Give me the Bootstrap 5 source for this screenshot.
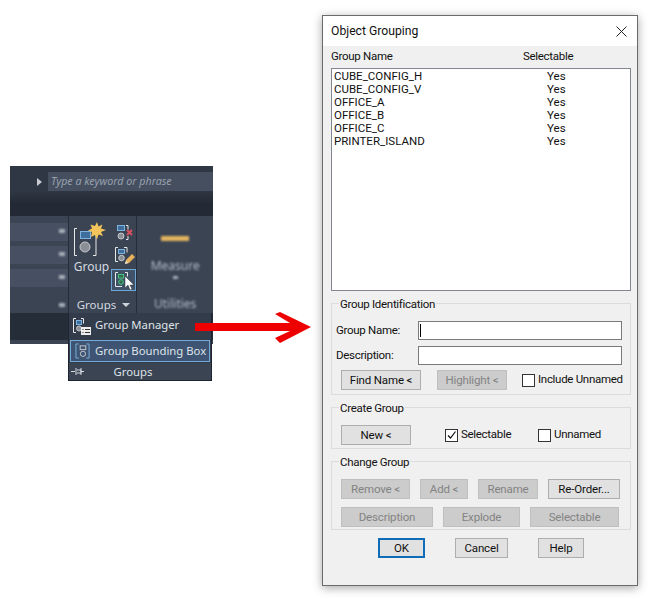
<!DOCTYPE html>
<html lang="en">
<head>
  <meta charset="UTF-8" />
  <title>Object Grouping</title>
  <link href="https://cdn.jsdelivr.net/npm/bootstrap@5.3.2/dist/css/bootstrap.min.css" rel="stylesheet">
  <style>
    body { background: #fff; margin: 0; width: 654px; height: 599px; overflow: hidden; position: relative; }
    /* left picture: ribbon */
    .ribbon-shot { position: absolute; left: 10px; top: 166px; width: 203px; height: 178px; background: #252d39; font-family: "Noto Sans", sans-serif; color: #d5dae0; font-size: 12px; }
    .search-row { height: 50px; padding: 6px 0 0 27px; background: linear-gradient(#2f3744 50%, #232a35 75%); }
    .search-tri { width: 0; height: 0; border-left: 5px solid #c8ccd2; border-top: 4px solid transparent; border-bottom: 4px solid transparent; margin-top: 6px; margin-right: 6px; }
    .search-box { width: 165px; height: 19px; background: #454f60; color: #98a1ae; font-style: italic; font-size: 10.7px; line-height: 19px; padding-left: 3px; white-space: nowrap; }
    .panels { height: 97px; gap: 1px; }
    .panel-a { width: 58px; background: #3a4453; padding-top: 7px; }
    .blur-row { height: 18px; margin-bottom: 5px; background: #465062; filter: blur(.6px); padding: 6px 0 0 49px; }
    .blur-row.plain { background: none; padding-top: 11px; }
    .blur-row i { display: block; width: 6px; height: 4px; background: #a8afba; filter: blur(1px); }
    .panel-b { width: 68px; background: #3a4453; position: relative; }
    .panel-c { width: 76px; background: #3a4453; text-align: center; color: #b5bcc6; }
    .tool-big { position: absolute; left: 3px; top: 6px; }
    .tool-label { position: absolute; left: 5px; top: 42px; font-size: 12px; }
    .tool-small { position: absolute; }
    .tool-on { left: 42px; top: 53px; width: 25px; height: 22px; border: 1px solid #6fa8d6; background: #3f5268; }
    .panel-foot { position: absolute; left: 8px; top: 80px; font-size: 11.5px; white-space: nowrap; }
    .foot-tri { display: inline-block; width: 0; height: 0; border-top: 4px solid #cfd4da; border-left: 4px solid transparent; border-right: 4px solid transparent; margin: 0 0 2px 3px; }
    .line-bar { width: 28px; height: 5px; background: #e3b45f; margin: 20px auto 17px; filter: blur(1px); }
    .blur-text { filter: blur(1.3px); font-size: 12px; line-height: 16px; }
    .blur-dot { filter: blur(1px); width: 5px; height: 3px; background: #a8afba; margin: 2px auto 17px; }
    .strip { height: 27px; }
    .strip-low { height: 4px; background: #3a4453; }
    .drop-menu { position: absolute; left: 68px; top: 313px; width: 144px; height: 68px; background: #333c4a; border: 1px solid #1f2631; border-top: 0; font-family: "Noto Sans", sans-serif; color: #dfe3e8; font-size: 11.3px; }
    .drop-item { height: 25px; padding-left: 4px; gap: 4px; white-space: nowrap; }
    .drop-sel { height: 22px; margin: 2px 1px 0 1px; padding-left: 4px; gap: 5px; background: #3e5472; border: 1px solid #71a9d8; white-space: nowrap; }
    .drop-item svg, .drop-sel svg { flex: none; }
    .drop-foot { height: 17px; background: #3a4453; position: relative; text-align: center; line-height: 17px; margin-top: 1px; padding-right: 14px; }
    .pin { position: absolute; left: 2px; top: 4px; }
    .red-arrow { position: absolute; left: 190px; top: 305px; }
    /* right picture: dialog */
    .dlg { position: absolute; left: 322px; top: 15px; width: 316px; height: 571px; background: #f0f0f0; border: 1px solid #6a6a6a; box-shadow: 0 2px 9px rgba(0,0,0,.35); font-family: Roboto, "Liberation Sans", sans-serif; font-size: 11.5px; letter-spacing: -.3px; color: #111; }
    .dlg-title { height: 30px; background: #fff; padding: 0 10px 0 8px; font-size: 12.2px; letter-spacing: 0; }
    .dlg-body { padding: 0 6px 0 8px; }
    .list-head { height: 21px; padding-top: 1px; }
    .col-name { width: 192px; }
    .name-list { height: 223px; background: #fff; border: 1px solid #828790; padding: 1px 2px; margin-top: 1px; letter-spacing: 0; }
    .name-row { height: 13px; line-height: 13px; }
    .col-val { width: 213px; }
    .grp { position: relative; border: 1px solid #dcdcdc; margin-top: 12px; padding: 0 9px; }
    .grp-1 { height: 92px; }
    .grp-2 { height: 42px; }
    .grp-3 { height: 69px; }
    .grp-title { position: absolute; left: 7px; top: -7px; background: #f0f0f0; padding: 0 1px; line-height: 14px; }
    .w-btn { flex: none; height: 20px; padding: 0; background: #e1e1e1; border: 1px solid #adadad; border-radius: 0; font-size: 11.5px; letter-spacing: -.15px; color: #111; line-height: 17px; font-family: inherit; }
    .w-btn:disabled { background: #cccccc; border-color: #bfbfbf; color: #838383; opacity: 1; }
    .w-btn.dflt { border: 2px solid #0f6cb8; }
    .w-field { flex: none; height: 19px; background: #fff; border: 1px solid #7a7a7a; width: 204px; position: relative; }
    .caret-bar { position: absolute; left: 1px; top: 2px; width: 1px; height: 13px; background: #000; }
    .field-label { width: 82px; margin-left: -5px; flex: none; }
    .field-next { margin-top: 6px; }
    .btn-row { margin-top: 5px; }
    .chk { width: 13px; height: 13px; background: #fff; border: 1px solid #333; flex: none; display: block; margin-right: 3px; }
    .chk svg { display: block; }
    .chk-inc { margin-left: 15px; }
    .chk-sel { margin-left: 34px; }
    .sel-text { width: 77px; flex: none; }
    .w-80 { width: 80px; } .w-70 { width: 70px; } .w-69 { width: 69px; } .w-48 { width: 48px; } .w-60 { width: 60px; } .w-72 { width: 72px; }
    .w-92 { width: 92px; } .w-77 { width: 77px; } .w-89 { width: 89px; } .w-47 { width: 47px; } .w-53 { width: 53px; } .w-46 { width: 46px; }
    .gap-10 { gap: 10px; }
    .pt-17 { padding-top: 17px; }
    .dlg-actions { margin-top: 8px; padding-left: 47px; gap: 30px; }
  </style>
</head>
<body>

  <!-- ribbon -->
  <div class="ribbon-shot">
    <div class="search-row d-flex">
      <div class="search-tri"></div>
      <div class="search-box">Type a keyword or phrase</div>
    </div>
    <div class="panels d-flex">
      <div class="panel-a">
        <div class="blur-row"><i></i></div>
        <div class="blur-row"><i></i></div>
        <div class="blur-row"><i></i></div>
        <div class="blur-row plain"><i></i></div>
      </div>
      <div class="panel-b">
        <svg class="tool-big" width="34" height="34" viewBox="0 0 34 34">
          <path d="M5 6.500H2.500v27H5M21 6.500h3v27h-3" fill="none" stroke="#e8e8e8" stroke-width="1"/>
          <rect x="8.500" y="9.500" width="10" height="7" fill="#3f6e9a" stroke="#7db3e0"/>
          <circle cx="13" cy="25" r="5" fill="#8b8f96" stroke="#c4c7cb"/>
          <path d="M25 0l1.500 4.500 4-2-1.500 4 5 1.500-5 2 2 4-4.500-1.500-1.500 5-2-4.500-4 2 1-5-4-1.500 4-2-1.500-4 4.500 1.500z" fill="#f3c35c"/>
        </svg>
        <div class="tool-label">Group</div>
        <svg class="tool-small" style="left:48px;top:9px" width="18" height="16" viewBox="0 0 18 16">
          <rect x=".5" y=".5" width="7" height="5" fill="#3f6e9a" stroke="#7db3e0"/>
          <circle cx="4" cy="11" r="3" fill="#8b8f96" stroke="#c4c7cb"/>
          <path d="M9 .5h2M9 14.500h2M11 .5v4M11 11v3.500" stroke="#e8e8e8" fill="none"/>
          <path d="M10 5l5 5M15 5l-5 5" stroke="#d9505e" stroke-width="2"/>
        </svg>
        <svg class="tool-small" style="left:46px;top:31px" width="20" height="18" viewBox="0 0 20 18">
          <path d="M3 .5H.5v14H3M9 .5h3v5" stroke="#e8e8e8" fill="none"/>
          <rect x="3.500" y="2.500" width="6" height="4" fill="#3f6e9a" stroke="#7db3e0"/>
          <circle cx="6.500" cy="11" r="2.800" fill="#8b8f96" stroke="#c4c7cb"/>
          <path d="M10 17l1-4 6-6 3 3-6 6z" fill="#e8b25c"/>
          <path d="M10 17l1-3 2 2z" fill="#eee"/>
        </svg>
        <div class="tool-small tool-on">
          <svg class="d-block" style="margin:1px 0 0 3px" width="21" height="19" viewBox="0 0 21 19">
            <path d="M3 1.500H.5v14H3M10 1.500h2.500v4M3 15.500h4" stroke="#e8e8e8" fill="none"/>
            <rect x="3.500" y="3.500" width="5" height="3.500" fill="#35694f" stroke="#49c27e"/>
            <circle cx="6" cy="11" r="2.300" fill="#35694f" stroke="#49c27e"/>
            <path d="M10 5v12l3-3 2 5 2-1-2-4h4z" fill="#fff" stroke="#333" stroke-width=".5"/>
          </svg>
        </div>
        <div class="panel-foot">Groups <span class="foot-tri"></span></div>
      </div>
      <div class="panel-c">
        <div class="line-bar"></div>
        <div class="blur-text">Measure</div>
        <div class="blur-dot"></div>
        <div class="blur-text">Utilities</div>
      </div>
    </div>
    <div class="strip"></div>
    <div class="strip-low"></div>
  </div>

  <div class="drop-menu">
    <div class="drop-item d-flex align-items-center">
      <svg width="18" height="18" viewBox="0 0 18 18">
        <path d="M3 1.500H.5v14H3M8 1.500h2.500v5" stroke="#e8e8e8" fill="none"/>
        <rect x="3.500" y="3.500" width="5" height="4" fill="#3f6e9a" stroke="#7db3e0"/>
        <circle cx="6" cy="11.500" r="2.500" fill="#8b8f96" stroke="#c4c7cb"/>
        <rect x="8" y="10" width="10" height="8" fill="#eee"/>
        <path d="M9.500 12.500h1M12 12.500h5M9.500 15.500h1M12 15.500h5" stroke="#333"/>
      </svg>
      <span>Group Manager</span>
    </div>
    <div class="drop-sel d-flex align-items-center">
      <svg width="15" height="18" viewBox="0 0 16 18">
        <path d="M4 1.500H1v15h3M12 1.500h3v15h-3" stroke="#7db3e0" fill="none"/>
        <rect x="5.500" y="3.500" width="6" height="4" fill="none" stroke="#c9ccd0"/>
        <circle cx="8.500" cy="12" r="2.800" fill="none" stroke="#c9ccd0"/>
      </svg>
      <span>Group Bounding Box</span>
    </div>
    <div class="drop-foot">
      <svg class="pin" width="13" height="9" viewBox="0 0 13 9">
        <path d="M0 4.500h4M5 1v7M10 1v7M6 3h4v3H6M10 4.500h3" stroke="#d5dae0" fill="none"/>
      </svg>
      Groups
    </div>
  </div>

  <svg class="red-arrow" width="125" height="44" viewBox="0 0 125 44">
    <path d="M5 18H100L85 9 90 7 121 22 90 38 85 33 100 26H5z" fill="#ee0000"/>
  </svg>

  <!-- dialog -->
  <div class="dlg">
    <div class="dlg-title d-flex align-items-center justify-content-between">
      <span>Object Grouping</span>
      <svg width="11" height="11" viewBox="0 0 11 11"><path d="M.5.500l10 10M10.500.500l-10 10" stroke="#222" fill="none"/></svg>
    </div>
    <div class="dlg-body">
      <div class="list-head d-flex align-items-center"><span class="col-name">Group Name</span><span>Selectable</span></div>
      <div class="name-list" id="names"></div>

      <div class="grp grp-1">
        <span class="grp-title">Group Identification</span>
        <div class="d-flex align-items-center pt-17">
          <span class="field-label">Group Name:</span>
          <div class="w-field"><div class="caret-bar"></div></div>
        </div>
        <div class="d-flex align-items-center field-next">
          <span class="field-label">Description:</span>
          <div class="w-field"></div>
        </div>
        <div class="d-flex align-items-center btn-row">
          <button class="w-btn w-80" type="button">Find Name &lt;</button>
          <button class="w-btn w-70 ms-3" type="button" disabled>Highlight &lt;</button>
          <span class="chk chk-inc"></span><span class="text-nowrap">Include Unnamed</span>
        </div>
      </div>

      <div class="grp grp-2">
        <span class="grp-title">Create Group</span>
        <div class="d-flex align-items-center pt-17">
          <button class="w-btn w-70" type="button">New &lt;</button>
          <span class="chk chk-sel"><svg width="11" height="11" viewBox="0 0 11 11"><path d="M2 5.500l2.500 2.500 5-6.500" fill="none" stroke="#111" stroke-width="1.200"/></svg></span><span class="sel-text">Selectable</span>
          <span class="chk"></span><span>Unnamed</span>
        </div>
      </div>

      <div class="grp grp-3">
        <span class="grp-title">Change Group</span>
        <div class="d-flex pt-17 gap-10">
          <button class="w-btn w-69" type="button" disabled>Remove &lt;</button>
          <button class="w-btn w-48" type="button" disabled>Add &lt;</button>
          <button class="w-btn w-60" type="button" disabled>Rename</button>
          <button class="w-btn w-72" type="button">Re-Order...</button>
        </div>
        <div class="d-flex gap-10 mt-2">
          <button class="w-btn w-92" type="button" disabled>Description</button>
          <button class="w-btn w-77" type="button" disabled>Explode</button>
          <button class="w-btn w-89" type="button" disabled>Selectable</button>
        </div>
      </div>

      <div class="dlg-actions d-flex">
        <button class="w-btn dflt w-47" type="button">OK</button>
        <button class="w-btn w-53" type="button">Cancel</button>
        <button class="w-btn w-46" type="button">Help</button>
      </div>
    </div>
  </div>

  <script src="https://cdn.jsdelivr.net/npm/bootstrap@5.3.2/dist/js/bootstrap.bundle.min.js"></script>
  <script>
    const groups = ["CUBE_CONFIG_H", "CUBE_CONFIG_V", "OFFICE_A", "OFFICE_B", "OFFICE_C", "PRINTER_ISLAND"];
    document.getElementById('names').innerHTML = groups.map(g =>
      `<div class="name-row d-flex"><span class="col-val">${g}</span><span>Yes</span></div>`).join('');
  </script>
</body>
</html>
